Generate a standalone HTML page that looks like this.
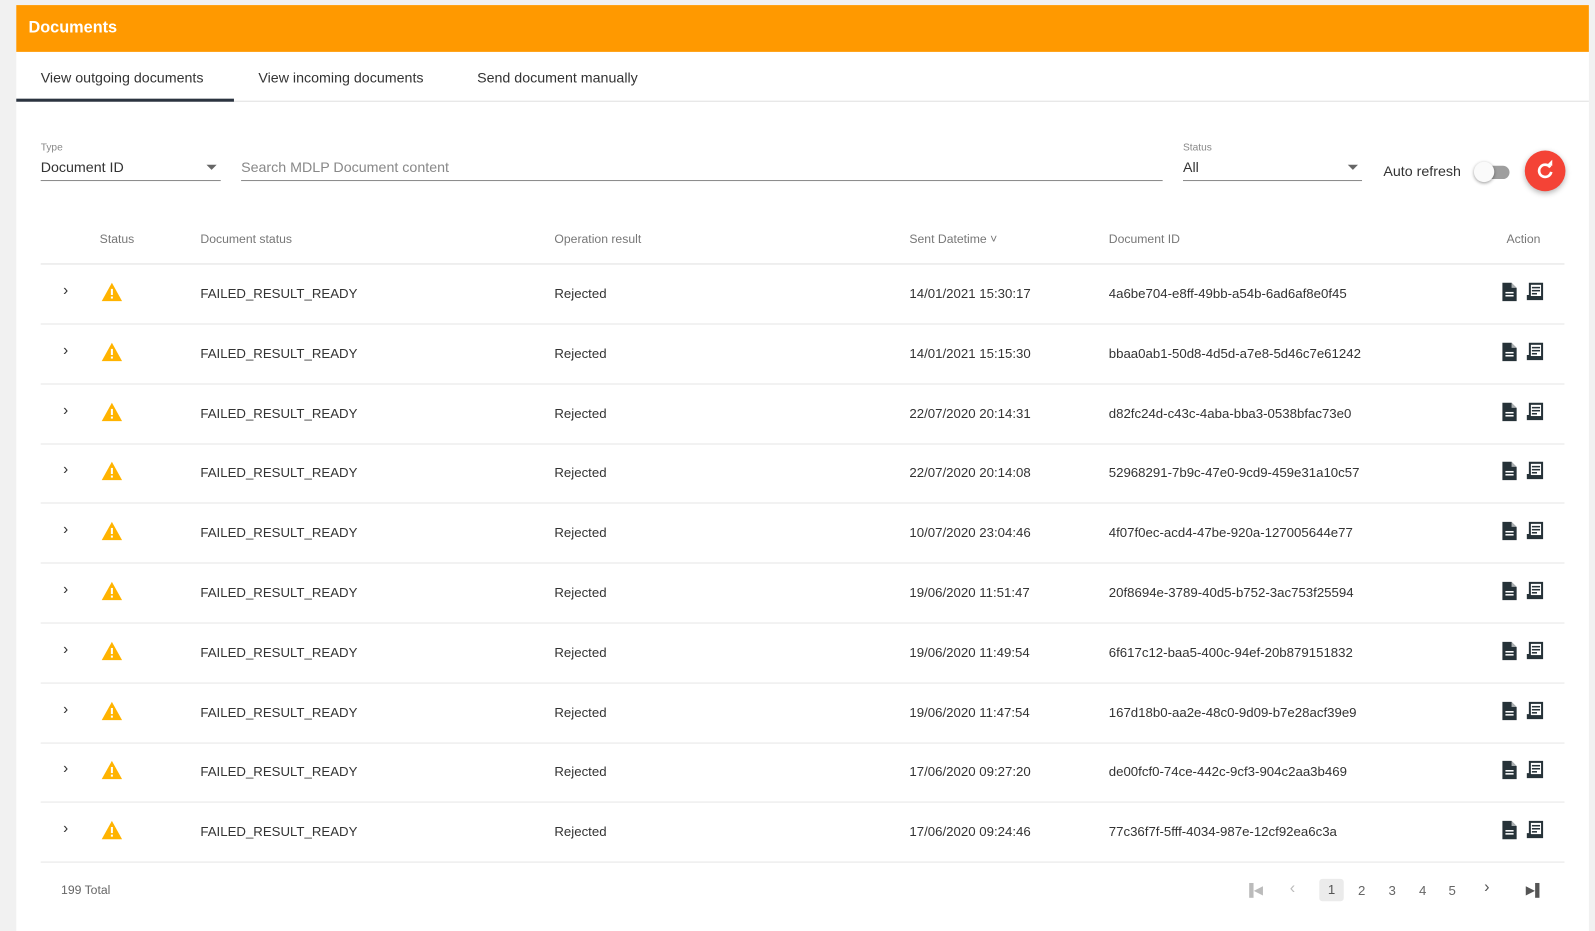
<!DOCTYPE html>
<html><head><style>
*{box-sizing:border-box;margin:0;padding:0}
html,body{width:1595px;height:931px;overflow:hidden;background:#f1f1f1}
#w{width:1568px;height:916px;transform:scale(1.0172);transform-origin:0 0;font-family:"Liberation Sans",sans-serif;color:#333;position:relative;background:#f1f1f1}
.card{position:absolute;left:16px;top:5px;width:1546px;height:926px;background:#fff}
.hdr{height:46px;background:#ff9900;color:#fff;font-weight:bold;font-size:16px;line-height:46px;padding-left:12px}
.tabs{position:relative;height:49px;border-bottom:1px solid #e0e0e0}
.tab{position:absolute;top:17px;font-size:14px;color:#333}
.ind{position:absolute;left:0;top:46px;width:214px;height:3px;background:#2b3440}
.abs{position:absolute}
.lbl{font-size:10px;color:#888}
.field{border-bottom:1px solid #888;font-size:14px}
.tri{position:absolute;width:0;height:0;border-left:5px solid transparent;border-right:5px solid transparent;border-top:5px solid #666}
.th{position:absolute;top:228px;font-size:12px;color:#777}
.row{position:absolute;left:40px;width:1498px;height:59px;border-bottom:1px solid #e6e6e6;font-size:13px}
.row span{position:absolute;top:21px}
</style></head><body><div id="w">
<div class="card">
<div class="hdr">Documents</div>
<div class="tabs">
<div class="tab" style="left:24px">View outgoing documents</div>
<div class="tab" style="left:238px">View incoming documents</div>
<div class="tab" style="left:453px">Send document manually</div>
<div class="ind"></div>
</div>
</div>
<div class="abs lbl" style="left:40px;top:140px">Type</div>
<div class="abs field" style="left:40px;top:156px;width:177px;height:22px">Document ID</div>
<div class="tri" style="left:203px;top:162px"></div>
<div class="abs field" style="left:237px;top:156px;width:906px;height:22px;color:#888">Search MDLP Document content</div>
<div class="abs lbl" style="left:1163px;top:140px">Status</div>
<div class="abs field" style="left:1163px;top:156px;width:176px;height:22px">All</div>
<div class="tri" style="left:1325px;top:162px"></div>
<div class="abs" style="left:1360px;top:160px;font-size:14px">Auto refresh</div>
<div class="abs" style="left:1452px;top:163px;width:32px;height:13px;border-radius:7px;background:#9e9e9e"></div>
<div class="abs" style="left:1449px;top:159px;width:20px;height:20px;border-radius:50%;background:#fafafa;box-shadow:0 1px 3px rgba(0,0,0,.4)"></div>
<div class="abs" style="left:1499px;top:148px;width:40px;height:40px;border-radius:50%;background:#f44336;box-shadow:0 2px 6px rgba(0,0,0,.3)">
<svg width="40" height="40" viewBox="0 0 40 40"><path d="M25 16.5A6 6 0 1 0 26 21" fill="none" stroke="#fff" stroke-width="2.6"/><path d="M21 15h6v-6z" fill="#fff"/></svg></div>
<div class="th" style="left:98px">Status</div>
<div class="th" style="left:197px">Document status</div>
<div class="th" style="left:545px">Operation result</div>
<div class="th" style="left:894px">Sent Datetime ˅</div>
<div class="th" style="left:1090px">Document ID</div>
<div class="th" style="left:1481px">Action</div>
<div class="abs" style="left:40px;top:259px;width:1498px;height:1px;background:#e0e0e0"></div>
<div id="rows"></div>
<div class="abs" style="left:60px;top:868px;font-size:12px;color:#666">199 Total</div>
<div class="abs" style="left:1224px;top:868px;font-size:12px;color:#bbb">▐◀</div>
<div class="abs" style="left:1268px;top:865px;font-size:16px;color:#bbb">‹</div>
<div class="abs" style="left:1297px;top:864px;width:24px;height:22px;background:#ebebeb;border-radius:3px;font-size:13px;text-align:center;line-height:22px;color:#555">1</div>
<div class="abs" style="left:1335px;top:868px;font-size:13px;color:#666">2</div>
<div class="abs" style="left:1365px;top:868px;font-size:13px;color:#666">3</div>
<div class="abs" style="left:1395px;top:868px;font-size:13px;color:#666">4</div>
<div class="abs" style="left:1424px;top:868px;font-size:13px;color:#666">5</div>
<div class="abs" style="left:1459px;top:864px;font-size:16px;color:#555">›</div>
<div class="abs" style="left:1500px;top:868px;font-size:12px;color:#555">▶▌</div>
</div>
<script>
var d=[["14/01/2021 15:30:17","4a6be704-e8ff-49bb-a54b-6ad6af8e0f45"],["14/01/2021 15:15:30","bbaa0ab1-50d8-4d5d-a7e8-5d46c7e61242"],["22/07/2020 20:14:31","d82fc24d-c43c-4aba-bba3-0538bfac73e0"],["22/07/2020 20:14:08","52968291-7b9c-47e0-9cd9-459e31a10c57"],["10/07/2020 23:04:46","4f07f0ec-acd4-47be-920a-127005644e77"],["19/06/2020 11:51:47","20f8694e-3789-40d5-b752-3ac753f25594"],["19/06/2020 11:49:54","6f617c12-baa5-400c-94ef-20b879151832"],["19/06/2020 11:47:54","167d18b0-aa2e-48c0-9d09-b7e28acf39e9"],["17/06/2020 09:27:20","de00fcf0-74ce-442c-9cf3-904c2aa3b469"],["17/06/2020 09:24:46","77c36f7f-5fff-4034-987e-12cf92ea6c3a"]];
var h="";
d.forEach(function(r,i){var t=260+i*58.8;
h+='<div class="row" style="top:'+t+'px"><span style="left:22px;top:17px;font-size:15px">›</span>'+
'<svg style="position:absolute;left:59px;top:17px" width="22" height="20" viewBox="0 0 22 20"><path d="M11 1L21 19H1z" fill="#ffb300"/><rect x="10" y="7" width="2" height="6" fill="#fff"/><rect x="10" y="14.5" width="2" height="2" fill="#fff"/></svg>'+
'<span style="left:157px">FAILED_RESULT_READY</span><span style="left:505px">Rejected</span><span style="left:854px">'+r[0]+'</span><span style="left:1050px">'+r[1]+'</span>'+
'<svg style="position:absolute;left:1436px;top:17px" width="42" height="20" viewBox="0 0 42 20"><path d="M1 1h9l5 5v13H1z" fill="#263238"/><path d="M10 1v5h5" fill="#fff" opacity=".6"/><rect x="4" y="10" width="8" height="1.5" fill="#fff"/><rect x="4" y="13" width="8" height="1.5" fill="#fff"/><path d="M27 1h14v17H25v-5h2z" fill="#263238"/><rect x="29" y="3" width="10" height="11" fill="#fff"/><rect x="30" y="5" width="8" height="1.5" fill="#263238"/><rect x="30" y="8" width="8" height="1.5" fill="#263238"/><rect x="30" y="11" width="5" height="1.5" fill="#263238"/></svg></div>';});
document.getElementById("rows").innerHTML=h;
</script>
</body></html>
